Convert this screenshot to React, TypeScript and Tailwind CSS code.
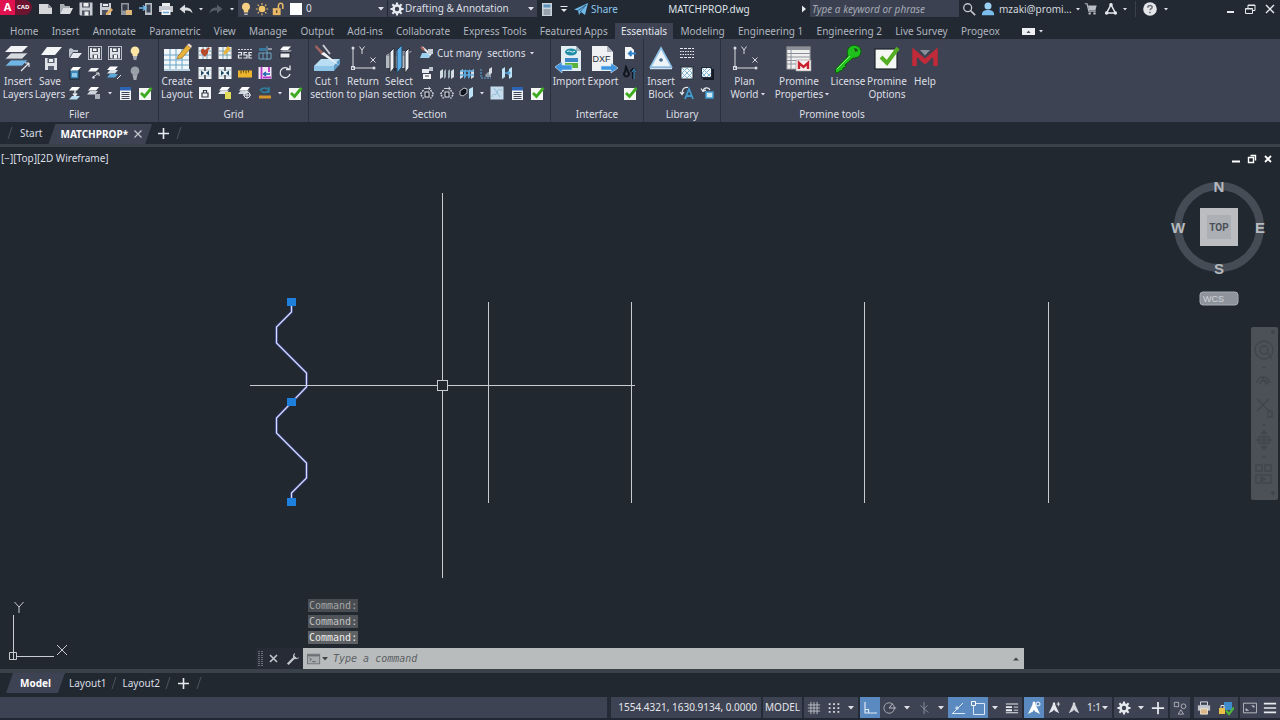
import React from 'react';

type Kids = { children?: React.ReactNode };

const W = '#e6e9ee';
const B = '#5aa9de';
const D = '#252b36';

function Ic({ children, s = 16, v = 16 }: Kids & { s?: number; v?: number }) {
  return (
    <svg width={s} height={s} viewBox={`0 0 ${v} ${v}`} fill="none" className="shrink-0" aria-hidden="true">
      {children}
    </svg>
  );
}

function Caret({ dark = false, small = false }: { dark?: boolean; small?: boolean }) {
  return (
    <svg width="8" height="6" viewBox="0 0 8 6" className="shrink-0" aria-hidden="true">
      <path d={small ? 'M2 2h4L4 4.4z' : 'M1 1h6L4 4.6z'} fill={dark ? '#444' : '#dde0e6'} />
    </svg>
  );
}

/* ---------- shared drawings ---------- */

const Check = () => (
  <Ic>
    <rect x="2" y="3" width="12" height="12" fill="#f4f7f4" />
    <path d="M4 8l3.500 3.500L14.500 3" stroke="#3cab1e" strokeWidth="2.800" />
  </Ic>
);
const Floppy = ({ framed = false }: { framed?: boolean }) => (
  <Ic>
    {framed && <rect x="1.5" y="1.5" width="13" height="13" stroke="#b9bec7" />}
    <path d="M3 3h10v10.5H4L3 12.500z" fill="#dfe2e7" />
    <path d="M5 3h6v4H5z" fill="#4b5160" />
    <path d="M6 3.500h3.500v2.500H6z" fill="#f4f4f4" />
    <path d="M5.500 9.500h5.500v4H5.500z" fill="#4b5160" />
    <path d="M7 10h3v3.500H7z" fill="#f4f4f4" />
  </Ic>
);
const Save = () => (
  <Ic>
    <path d="M1.500 1.500h13v13h-12l-1-1z" fill="#c9ccd2" />
    <path d="M4 1.500h8v5H4zM4 9.500h8v5H4z" fill="#4b5160" />
    <path d="M5.500 2h5v3.500h-5zM6.500 10.500h4v4h-4z" fill="#eceef0" />
  </Ic>
);
const Sheet = ({ y, c, x = 2 }: { y: number; c: string; x?: number }) => (
  <path d={`M${x + 3} ${y}h8l-3 3.500h-8z`} fill={c} />
);
const Bulb = ({ c }: { c: string }) => (
  <Ic>
    <path d="M8 1.500a4.300 4.300 0 0 0-2.500 7.800V11h5V9.300A4.300 4.300 0 0 0 8 1.500z" fill={c} />
    <path d="M6 12h4M6.500 14h3" stroke="#c9cdd4" strokeWidth="1.400" />
  </Ic>
);
const Table = () => (
  <Ic>
    <rect x="3" y="2" width="11" height="13" fill="#f0f2f4" />
    <rect x="3" y="2" width="11" height="3.500" fill="#2c63b5" />
    <path d="M4.500 7.500h8M4.500 9.500h8M4.500 11.500h8M4.500 13.500h8" stroke="#3d4456" />
  </Ic>
);
const GridBox = ({ c, d }: { c: string; d: string }) => (
  <Ic>
    <rect x="1.500" y="2" width="13" height="12" fill="#edf3f5" />
    <path d="M6 2v12M10 2v12M2 6h12M2 10h12" stroke="#5d90a6" strokeWidth=".8" />
    <path d={d} fill={c} />
  </Ic>
);
const Arrows = () => (
  <Ic>
    <rect x="1.500" y="2" width="13" height="12" fill="#edf3f5" />
    <path d="M8 2v4M8 10v4" stroke="#222a35" strokeWidth="1.400" />
    <path d="M2 5h5M9 5h5M2 11h5M9 11h5" stroke="#b3c5cf" />
    <path d="M7.200 8L4 5.500v5zM8.800 8L12 5.500v5z" fill="#1d4a66" />
  </Ic>
);
const Axes = () => (
  <Ic s={30} v={30}>
    <path d="M5 3v21h21" stroke="#d8dce2" />
    <rect x="3.500" y="22.500" width="3" height="3" stroke="#d8dce2" />
    <circle cx="5" cy="4" r="1.500" fill="#d8dce2" />
    <circle cx="26" cy="24" r="1.500" fill="#d8dce2" />
    <path d="M11.500 2.500l2.500 3.500 2.500-3.500M14 6v4M22.500 13.500l5 5m0-5l-5 5" stroke="#d8dce2" />
  </Ic>
);
const Planes = ({ arrow = false }: { arrow?: boolean }) => (
  <Ic>
    <path d="M1 6l3-2v8l-3 2zM12 6l3-2v8l-3 2z" fill="#d3dce3" />
    <path d="M5 6l2-2v8l-2 2zM9 6l2-2v8l-2 2z" fill={arrow ? B : '#9fb0bd'} />
    {arrow && <path d="M1 6h14M1 10h14" stroke={B} strokeWidth="1.400" />}
  </Ic>
);
const Gate = () => (
  <Ic>
    <path d="M4.500 5L1.500 9l3 4.500M11.500 5l3 4-3 4.500" stroke="#cfd6dd" strokeWidth="1.400" strokeDasharray="2 1" />
    <rect x="6" y="7" width="4" height="5" fill="#1f2631" stroke="#dfe4e9" />
    <path d="M5 3.500h6M9.500 2l2 1.500-2 1.500" stroke="#cfd6dd" />
  </Ic>
);
const Gear = ({ s = 14 }: { s?: number }) => (
  <Ic s={s}>
    <circle cx="8" cy="8" r="4" stroke={W} strokeWidth="3" />
    <path d="M8 .5v3M8 12.500v3M.5 8h3M12.500 8h3M2.700 2.700l2 2M11.300 11.300l2 2M13.300 2.700l-2 2M4.700 11.300l-2 2" stroke={W} strokeWidth="2.400" />
  </Ic>
);

/* ---------- ribbon icon sets ---------- */

const filer: React.ReactNode[][] = [
  [
    <Ic key="a"><path d="M2 4l2-1 3 2h4v2H6l-4 6z" fill="#b9c0c9" /><path d="M6 8h9l-4 5H3z" fill={W} /></Ic>,
    <Floppy key="b" framed />,
    <Floppy key="c" framed />,
    <Bulb key="d" c="#fbe6a6" />,
  ],
  [
    <Ic key="a"><rect x="3" y="5" width="9" height="9" stroke="#16202a" fill="#3c87b7" /><Sheet y={2} c="#fff" x={3} /><path d="M5 8h5v4H5z" fill="#8ec9ec" /></Ic>,
    <Ic key="b"><Sheet y={3} c="#f4f4f4" x={1} /><path d="M6 12l6-4M12 8H9M12 8v3" stroke="#dfe3e8" /><circle cx="6.500" cy="12.500" r="1.200" fill={W} /></Ic>,
    <Ic key="c"><Sheet y={1.5} c="#fff" x={0} /><Sheet y={5} c="#d8e3ec" x={0} /><Sheet y={9} c={B} x={0} /><path d="M10 14l4-4" stroke={W} /></Ic>,
    <Bulb key="d" c="#9aa0a8" />,
  ],
  [
    <Ic key="a"><Sheet y={2} c="#fff" /><Sheet y={11} c="#b8dcf2" /><path d="M8 5v6M6 8.500l2 2.500 2-2.500" stroke={W} strokeWidth="1.400" /></Ic>,
    <Ic key="b"><Sheet y={2} c="#fff" x={1} /><Sheet y={6} c="#cfd6dd" x={0} /><path d="M8 9h5v5H8z" fill="#aab0ba" /></Ic>,
    null,
    <Table key="c" />,
    <Check key="d" />,
  ],
];

const grid: React.ReactNode[][] = [
  [
    <GridBox key="a" c="#b4492b" d="M4 4.500l2.500-1L8 5l4-3 1 1.500-2 2V8l-3 4-4-4z" />,
    <GridBox key="b" c="#e9b53c" d="M6 8l5-7 3 3-6 6z" />,
    <Ic key="c"><path d="M1 4.500h14" stroke="#cfd4da" strokeDasharray="2 1" /><path d="M1 7.500h3.500v2.500H1.500v3H5M10 7.500H7v2.500h3v3H6.500M15 7.500h-3V13h3M12 10.200h2.500" stroke={W} strokeWidth="1.200" /></Ic>,
    <Ic key="d"><path d="M2 3h7v3H2z" fill="#37799d" /><path d="M10 1v14M2 8h12v6H2zM6 8v6" stroke="#68a5c4" /><path d="M11 4h4" stroke={W} /></Ic>,
    <Ic key="e"><Sheet y={1.5} c="#fff" x={3} /><path d="M3 8h10v5H3z" fill="#e8eaed" stroke="#20252f" /><path d="M3 7l3-2h9l-2 2z" fill="#8c939e" /></Ic>,
  ],
  [
    <Arrows key="a" />,
    <Arrows key="b" />,
    <Ic key="c"><path d="M1 5.500h14v7H1z" fill="#ecb52d" /><path d="M4 5.500v3M6.500 5.500v2M9 5.500v3M11.500 5.500v2" stroke="#5b4410" /></Ic>,
    <Ic key="d"><rect x="1.500" y="2" width="13" height="12" fill="#f3e6f7" /><path d="M4.500 2v12M12 2v5M6 12.500h8" stroke="#b438c6" strokeWidth="1.800" /><path d="M13 9H7m2-2L6.500 9 9 11" stroke="#1e68ae" strokeWidth="1.500" /></Ic>,
    <Ic key="e"><path d="M12 4.500A5 5 0 1 0 13 9" stroke={W} strokeWidth="1.300" /><path d="M9 4.500h4v-4" stroke={W} strokeWidth="1.300" /></Ic>,
  ],
  [
    <Ic key="a"><rect x="2" y="2" width="12" height="12" fill="#f2f4f5" /><path d="M5 8h6v4H5zM6.500 8V5.500h3V8" stroke="#333b48" strokeWidth="1.200" /></Ic>,
    <Ic key="b"><Sheet y={2} c="#fff" x={2} /><Sheet y={5.5} c="#dfe5ea" x={1} /><path d="M8 7h6v7H8z" fill="#e2dc5c" /></Ic>,
    <Ic key="c"><Sheet y={2} c="#fff" x={2} /><Sheet y={5.5} c="#cfd6dd" x={1} /><circle cx="10" cy="10" r="3" stroke={W} /><path d="M10 6v8M6 10h8" stroke={W} /></Ic>,
    <Ic key="d"><path d="M3 5q5 5 9 0M3 5q5-4 9 0M12 2v5H9" stroke="#2f7f9f" strokeWidth="1.600" /><path d="M2 10.500h12v3H2z" fill="#d9942b" /></Ic>,
    null,
    <Check key="e" />,
  ],
];

const section: React.ReactNode[][] = [
  [
    <Ic key="a"><path d="M3 4h7v4H3z" fill={W} /><path d="M4 9h8v5H4z" fill="#f6f6f6" /><path d="M10 2h4v4h-4z" fill="#bcc4cc" /><path d="M6 11h4" stroke="#333b48" /></Ic>,
    <Planes key="b" />,
    <Planes key="c" arrow />,
    <Ic key="d"><path d="M2 4v9h10" stroke={B} strokeDasharray="2 1" /><path d="M6 10l3-3h3v5H7z" fill="#8f9ba8" /><path d="M10 4l3-2v6l-3 2z" fill="#d8dde3" /></Ic>,
    <Ic key="e"><path d="M3 4l3-2v10l-3 2zM10 4l3-2v10l-3 2z" fill="#bfe3f7" /><path d="M6 8h5M9 6l2 2-2 2" stroke={B} strokeWidth="1.400" /></Ic>,
  ],
  [
    <Gate key="a" />,
    <Gate key="b" />,
    <Ic key="c"><path d="M1 6l4-3 3 1v4l-4 3-3-1z" fill="#10151d" stroke="#b8c0c8" /><path d="M10 4l4-2v9l-4 3z" fill="#bfe3f7" /></Ic>,
    null,
    <Ic key="d"><rect x="1.500" y="1.500" width="13" height="13" fill="#c6dcec" /><path d="M3 12c2-6 3 1 5-5s3 1 5-3M5 3l6 9" stroke="#8db8d6" /></Ic>,
    <Table key="e" />,
    <Check key="f" />,
  ],
];

function SmallGrid({ rows, name }: { rows: React.ReactNode[][]; name: string }) {
  return (
    <>
      {rows.map((row, r) => (
        <div key={r} className="flex h-5 items-center">
          {row.map((ic, c) =>
            ic === null ? (
              <button key={c} aria-label={`${name} more`} className="flex w-2.5 justify-center"><Caret small /></button>
            ) : (
              <button key={c} aria-label={`${name} tool ${r + 1}.${c + 1}`} className="flex w-5 justify-center">{ic}</button>
            ),
          )}
        </div>
      ))}
    </>
  );
}

function Big({ icon, lines, w, more = false }: { icon: React.ReactNode; lines: string[]; w: string; more?: boolean }) {
  return (
    <button className={`flex shrink-0 flex-col items-center ${w}`}>
      <span className="flex h-[32px] items-center justify-center">{icon}</span>
      <span className="relative text-center leading-[13px] whitespace-nowrap">
        {lines.map((l) => <span key={l} className="block">{l}</span>)}
        {more && <span className="absolute -right-2 bottom-1"><Caret small /></span>}
      </span>
    </button>
  );
}

function Panel({ title, w, last = false, children }: Kids & { title: string; w: string; last?: boolean }) {
  return (
    <section className={`flex shrink-0 flex-col ${last ? '' : 'border-r border-[#2a303c]'} ${w}`}>
      <div className="flex h-[67px] pt-1">{children}</div>
      <h2 className="text-center leading-4">{title}</h2>
    </section>
  );
}

/* ---------- large icons ---------- */

const InsertLayers = (
  <Ic s={32} v={32}>
    <path d="M9 3h17l-6 6H3z" fill="#f2f3f5" /><path d="M9 10h17l-6 6H3z" fill="#d6dade" stroke="#4a5060" strokeWidth=".8" />
    <path d="M9 17h17l-6 6H3z" fill="#6fb6e6" stroke="#4a5060" strokeWidth=".8" />
    <path d="M19 28l8-8m0 0h-4m4 0v4" stroke="#e6e9ee" strokeWidth="1.200" />
  </Ic>
);
const SaveLayers = (
  <Ic s={32} v={32}>
    <path d="M13 4h15l-7 8H7z" fill="#f4f5f6" /><path d="M11 15h12v12H11z" fill="#dfe2e6" />
    <path d="M13.500 15h7v5h-7zM14 23h6v4h-6z" fill="#596070" /><path d="M15 16h4v3h-4z" fill="#eee" />
  </Ic>
);
const CreateLayout = (
  <Ic s={32} v={32}>
    <rect x="3" y="6" width="25" height="20" fill="#f1f6f9" />
    <path d="M9 6v20M15 6v20M21 6v20M3 12h25M3 17h25M3 22h25" stroke="#6aa5c9" />
    <path d="M3 26h26v2H3z" fill="#b9d2e0" /><path d="M17 13L26 2l4 3-9 10-5 1z" fill="#e8b23b" stroke="#73602f" strokeWidth=".6" /><path d="M26 2l4 3 1-2-3-2.500z" fill="#f2d9d2" />
  </Ic>
);
const CutOne = (
  <Ic s={32} v={32}>
    <path d="M10 16h19l-6 7H3z" fill="#b9def4" /><path d="M3 23h20v5H3z" fill="#8fc5e8" /><path d="M23 23l6-7v5l-6 7z" fill="#5b9cc9" />
    <path d="M5 2l8 8-2 2-7-8z" fill="#a3655f" /><path d="M10 11l3-2 16 14z" fill="#f2f4f6" /><path d="M12 2l7 9" stroke="#d0d4da" strokeWidth="1.800" />
  </Ic>
);
const SelectSection = (
  <Ic s={32} v={32}>
    <path d="M3 12l7-4h19l-4 4v12H3z" fill="#8d949d" /><path d="M3 13h22v12H3z" fill="#b3b8be" />
    <path d="M7 9l4-4v20l-4 5zM22 9l4-4v20l-4 5z" fill="#edf0f2" stroke="#2a303b" /><path d="M14 7l5-5v22l-5 6z" fill="#58aee8" stroke="#23405a" /><path d="M12 8v20" stroke="#222833" strokeWidth="1.500" />
  </Ic>
);
const Import = (
  <Ic s={32} v={32}>
    <path d="M8 3h15l5 5v20H8z" fill="#e3eef2" /><path d="M23 3l5 5h-5z" fill="#9fb3bf" />
    <ellipse cx="18" cy="9" rx="6" ry="3.500" fill="#1e8da8" /><path d="M14 9c2-3 5 2 8-1" stroke="#fff" /><path d="M12 15h13v4H12z" fill="#3d86c6" /><path d="M12 20h13v5H12z" fill="#58b23c" />
    <path d="M2 24l7-5v3h10v5H9v3z" fill="#3e94df" stroke="#cfe7fa" strokeWidth=".6" />
  </Ic>
);
const Export = (
  <Ic s={32} v={32}>
    <path d="M5 3h15l6 6v19H5z" fill="#f0f1f2" /><path d="M20 3l6 6h-6z" fill="#adb4bd" />
    <text x="5.500" y="19" fontSize="9" fontFamily="'Liberation Sans', sans-serif" fill="#242b37">DXF</text>
    <path d="M31 25l-7-5v3H14v4h10v3z" fill="#3e94df" stroke="#cfe7fa" strokeWidth=".6" />
  </Ic>
);
const InsertBlock = (
  <Ic s={32} v={32}>
    <path d="M16 5L5.500 24h21z" fill="#eef3f7" stroke="#8fc4ea" strokeWidth="1.600" />
    <circle cx="16" cy="17" r="1.800" fill="#3f6d91" /><path d="M5 25.500h22" stroke="#cfe3f2" strokeWidth="1.500" />
  </Ic>
);
const Props = (
  <Ic s={32} v={32}>
    <rect x="4" y="4" width="23" height="22" fill="#f0f0f0" stroke="#aaa" /><path d="M4 4h23v3H4z" fill="#8b9099" />
    <path d="M8 4v22M4 10.500h23M4 14h23M4 17.500h23M4 21h23" stroke="#8c9199" />
    <rect x="13" y="17" width="15" height="11" fill="#f6f0f0" stroke="#999" strokeWidth=".6" /><path d="M16 26v-6l4.500 4 4.500-4v6" stroke="#c9202e" strokeWidth="2.400" />
  </Ic>
);
const Key = (
  <Ic s={32} v={32}>
    <path d="M20 2.500c5-1 9 2 9 6s-4 7-8 6.500L13 22l1 2-3 1-.5 2.500-3 .5-1 1.500-3 .5V26L16 13c-2-4 0-9 4-10.500z" fill="#1fc11c" stroke="#0c5a0b" />
    <path d="M22 5c2 0 4 1 4 3l-3 1c0-2-1-3-1-4z" fill="#24541f" /><path d="M5 26L18 13" stroke="#8bf077" />
  </Ic>
);
const Options = (
  <Ic s={32} v={32}>
    <rect x="4" y="6" width="22" height="20" fill="#f5f7f5" stroke="#1d232c" strokeWidth="1.200" />
    <path d="M10 14l6 6L27 5" stroke="#55ad22" strokeWidth="4" />
  </Ic>
);
const MLogo = (
  <Ic s={32} v={32}>
    <path d="M5.500 23V9.500L16 18.500l10.500-9V23" stroke="#c12a38" strokeWidth="4.500" /><path d="M11 7h10l-5 5.500z" fill="#8a9099" /><path d="M9.500 15v9M22.500 15v9" stroke="#3d4252" strokeWidth="1.500" />
  </Ic>
);

const tabs = ['Home', 'Insert', 'Annotate', 'Parametric', 'View', 'Manage', 'Output', 'Add-ins', 'Collaborate', 'Express Tools', 'Featured Apps', 'Essentials', 'Modeling', 'Engineering 1', 'Engineering 2', 'Live Survey', 'Progeox'];

const quick: [string, React.ReactNode][] = [
  ['New', <Ic key="i"><path d="M1 3h9l4 4v6H1z" fill="#d4d6da" /><path d="M10 3l4 4h-4z" fill="#8e939c" /></Ic>],
  ['Open', <Ic key="i"><path d="M2 3h4l1 2h5v2H5l-3 6z" fill="#a9adb4" /><path d="M5 7h10l-3 6H2z" fill="#dcdee2" /></Ic>],
  ['Save', <Save key="i" />],
  ['Save as', <Ic key="i"><path d="M2 2h11v12H2z" fill="#c9ccd2" /><path d="M4 2h7v4H4zM4 9h6v5H4z" fill="#4b5160" /><path d="M5 3h5v2H5z" fill="#eee" /><path d="M8 12l5-5 2 2-5 5H8z" fill="#e3b36a" /></Ic>],
  ['Open from web', <Ic key="i"><path d="M3 2h8v12H3z" fill="#8f949d" /><path d="M4.500 3.500h5v6h-5z" fill="#353b48" /><path d="M8 9h6v5H8z" fill="#dfb77a" /></Ic>],
  ['Save to web', <Ic key="i"><path d="M7 2h7v12H7z" fill="#b9bdc4" /><path d="M8.500 3.500h4v8h-4z" fill="#3e4a5b" /><path d="M1 7h6M5 4.500L8 7 5 9.500" stroke="#6db7ea" strokeWidth="1.500" /></Ic>],
  ['Plot', <Ic key="i"><path d="M4 2h8v3H4z" fill="#eceef0" /><path d="M1 5h14v6H1z" fill="#c6cad0" /><path d="M3.500 9h9v5h-9z" fill="#f1f3f5" /><path d="M5 11.500h6" stroke="#6aa8d8" strokeWidth="1.500" /></Ic>],
  ['Undo', <Ic key="i"><path d="M7 3.500v3c4 0 7 1.500 7.500 6C13 10 10.500 9.500 7 9.500v3L1.500 8z" fill="#dcdee2" /></Ic>],
];

const Slash = () => (
  <svg width="8" height="14" viewBox="0 0 8 14" className="shrink-0" aria-hidden="true"><path d="M6 1L2 13" stroke="#4d535f" /></svg>
);

/* ---------- title bar ---------- */

function TitleBar() {
  return (
    <header className="flex h-[18px] items-center bg-[#222933]">
      <button aria-label="Application menu" className="mr-1 flex h-[15px] w-8 items-center self-start rounded-r-lg bg-[#6d1430] text-white">
        <span className="flex h-full w-[15px] items-center justify-center bg-[#e01250] text-[11px] font-bold">A</span>
        <span className="pl-0.5 text-[6px] font-bold">CAD</span>
      </button>
      {quick.map(([n, ic]) => <button key={n} aria-label={n} className="flex w-5 justify-center">{ic}</button>)}
      <button aria-label="Undo list" className="flex w-2.5 justify-center"><Caret small /></button>
      <button aria-label="Redo" className="flex w-5 justify-center">
        <Ic><path d="M9 3.500v3c-4 0-7 1.500-7.500 6C3 10 5.500 9.500 9 9.500v3L14.500 8z" fill="#565c67" /></Ic>
      </button>
      <button aria-label="Redo list" className="flex w-3 justify-center"><Caret small /></button>
      <label className="flex h-[17px] w-[149px] items-center self-start bg-[#3b4150]">
        <span className="flex w-4 justify-center"><Ic s={14}><path d="M8 1a4.500 4.500 0 0 0-2.500 8.300V12h5V9.300A4.500 4.500 0 0 0 8 1z" fill="#f6cf83" /><path d="M6 14h4" stroke="#ccc" strokeWidth="1.500" /></Ic></span>
        <span className="flex w-4 justify-center"><Ic s={14}><circle cx="8" cy="8" r="3.800" fill="#f4c56a" /><path d="M8 1v2M8 13v2M1 8h2M13 8h2M3 3l1.500 1.500M11.500 11.500L13 13M13 3l-1.500 1.500M4.500 11.500L3 13" stroke="#f4c56a" strokeWidth="1.300" /></Ic></span>
        <span className="flex w-4 justify-center"><Ic s={14}><path d="M2 7h9v8H2z" fill="#e8b868" /><path d="M8.500 7V4a2.500 2.500 0 0 1 5 0v4" stroke="#e8b868" strokeWidth="1.800" /><path d="M6.500 9.500v3" stroke="#5b482a" strokeWidth="1.500" /></Ic></span>
        <span className="mx-1 h-[12px] w-[12px] bg-white" />
        <select aria-label="Layer" className="min-w-0 flex-1 appearance-none bg-transparent outline-none"><option>0</option></select>
        <span className="pr-0.5"><Caret /></span>
      </label>
      <label className="ml-px flex h-[17px] w-[149px] items-center self-start bg-[#3b4150] pl-0.5">
        <Gear />
        <select aria-label="Workspace" className="min-w-0 flex-1 appearance-none bg-transparent pl-px outline-none"><option>Drafting &amp; Annotation</option></select>
        <span className="pr-0.5"><Caret /></span>
      </label>
      <button aria-label="Calculator" className="flex w-5 justify-center">
        <Ic><path d="M3 2h10v13H3z" fill="#c9d3dc" /><path d="M4.500 3.500h7v3h-7z" fill="#5c93bd" /><path d="M4.500 9h7M4.500 11h7M4.500 13h7" stroke="#6a7482" /></Ic>
      </button>
      <button aria-label="Customize" className="flex w-3.5 justify-center">
        <Ic s={10} v={10}><path d="M1.500 2.500h7" stroke={W} /><path d="M2 5h6L5 8z" fill={W} /></Ic>
      </button>
      <button className="flex items-center gap-0.5 pl-0.5 text-[#8cc6ee]">
        <Ic><path d="M1 8.500L15 2l-3 12-4-3-2 3-1-4.500z" fill="#6db8e8" /><path d="M5 9.500L13 4l-6 7" stroke="#28516d" strokeWidth=".8" /></Ic>
        Share
      </button>
      <h1 className="flex-1 text-center text-[#dfe2e7]">MATCHPROP.dwg</h1>
      <div className="flex h-full w-[480px] items-center text-[#d4d7dd]">
        <button aria-label="Expand search" className="flex w-2.5 justify-start"><Ic s={8} v={8}><path d="M2 0.500v7L6 4z" fill="#e6e9ee" /></Ic></button>
        <input aria-label="Search" placeholder="Type a keyword or phrase" className="h-[17px] w-[149px] self-start bg-[#3b4150] px-0.5 italic outline-none placeholder:text-[#a5abb6]" />
        <button aria-label="Find" className="flex w-5 justify-center"><Ic s={14}><circle cx="6.500" cy="6.500" r="4.500" stroke="#c3c7ce" strokeWidth="1.500" /><path d="M10 10l5 5" stroke="#c3c7ce" strokeWidth="2" /></Ic></button>
        <button className="flex w-[102px] items-center gap-0.5 pl-0.5">
          <Ic s={14}><circle cx="8" cy="4.500" r="4" fill="#9bd0f5" /><path d="M1 15c0-5 3-6 7-6s7 1 7 6z" fill="#7bbdec" /></Ic>
          <span className="flex-1 pl-0.5 text-left">mzaki@promi...</span>
          <Caret small />
        </button>
        <button aria-label="App store" className="flex w-5 justify-center"><Ic s={14}><path d="M1 2h2.500l2 8.500h8" stroke="#b9bdc5" strokeWidth="1.300" /><path d="M4.500 4h10l-1.500 5.500H6z" fill="#b9bdc5" /><circle cx="6.500" cy="13" r="1.400" fill="#b9bdc5" /><circle cx="12" cy="13" r="1.400" fill="#b9bdc5" /></Ic></button>
        <button aria-label="Connect" className="flex w-5 items-center justify-center"><Ic s={14}><path d="M8 3L3 12.500h10z" stroke={W} strokeWidth="1.700" /><circle cx="8" cy="3" r="2" fill={W} /><circle cx="3" cy="12.500" r="2" fill={W} /><circle cx="13" cy="12.500" r="2" fill={W} /></Ic></button>
        <Caret small />
        <span className="mx-1.5 h-4 w-px bg-[#3a404c]" />
        <button aria-label="Help" className="flex w-4 justify-center"><Ic s={14}><circle cx="8" cy="8" r="7.800" fill="#e4e6ea" /><path d="M5.500 6.500c0-3.500 5-3.300 5-.6 0 1.600-2.300 1.700-2.400 3.600M8 11.200v1.600" stroke="#6b7079" strokeWidth="1.700" /></Ic></button>
        <span className="ml-1 flex"><Caret small /></span>
        <div className="ml-auto flex">
          <button aria-label="Minimize" className="flex w-5 justify-center"><Ic s={12} v={12}><path d="M3 9h7" stroke={W} strokeWidth="2" /></Ic></button>
          <button aria-label="Restore" className="flex w-5 justify-center"><Ic s={12} v={12}><path d="M1.500 5.500h7v5h-7zM4 5V2h7v5.500H9M1.500 6h7M4 2.500h7" stroke={W} /></Ic></button>
          <button aria-label="Close" className="flex w-5 justify-center"><Ic s={12} v={12}><path d="M2 2l8 8m0-8l-8 8" stroke={W} strokeWidth="1.400" /></Ic></button>
        </div>
      </div>
    </header>
  );
}

/* ---------- drawing area ---------- */

function Drawing() {
  const pl = '291.5,155 291.5,165 276.5,180 276.5,196 306.5,226 306.5,240 276.5,271 276.5,286 306.5,316 306.5,331 291.5,346 291.5,355';
  return (
    <svg width="1280" height="523" viewBox="0 0 1280 523" fill="none" className="absolute left-0 top-0 max-w-none" aria-label="Drawing">
      <polyline points={pl} stroke="#4a55b8" strokeWidth="3" opacity=".6" />
      <polyline points={pl} stroke="#d9dcf6" strokeWidth="1.200" />
      <g stroke="#c8cbd0" shapeRendering="crispEdges">
        <path d="M488.500 155v201M631.500 155v201M864.500 155v201M1048.500 155v201" />
        <path d="M442.500 46v187M442.500 244v187M250 238.500h187M448 238.500h187M437.500 233.500h10v10h-10z" />
      </g>
      <g fill="#1f7fdc"><path d="M287 151h9v8h-9zM287 251h9v8h-9zM287 351h9v8h-9z" /></g>
      <path d="M13.500 468v44M17 509.500h37M9.500 505.500h7v7h-7zM14.500 455l4.500 5 4.500-5M19 460v6M57 498l10 10m0-10l-10 10" stroke="#c9cdd3" />
    </svg>
  );
}

function ViewCube() {
  return (
    <svg width="100" height="130" viewBox="0 0 100 130" fill="none" className="absolute right-[11px] top-[30px]" aria-label="View cube">
      <circle cx="50" cy="50" r="41" stroke="#464c55" strokeWidth="8" />
      <g fontFamily="'Liberation Sans', sans-serif" fontWeight="700" fontSize="15" fill="#b6babf" textAnchor="middle">
        <text x="50" y="15">N</text><text x="9" y="56">W</text><text x="91" y="56">E</text><text x="50" y="97">S</text>
      </g>
      <rect x="31" y="31" width="38" height="38" fill="#bbbdc0" /><rect x="38" y="38" width="24" height="24" fill="#acafb3" />
      <text x="50" y="54" fontFamily="Roboto, sans-serif" fontWeight="700" fontSize="10" fill="#4a4f57" textAnchor="middle">TOP</text>
      <rect x="31" y="115" width="38" height="13" rx="3" fill="#8f939c" stroke="#a9adb5" />
      <text x="34" y="125" fontFamily="'Liberation Sans', sans-serif" fontSize="9" fill="#d0d3d8">WCS</text>
    </svg>
  );
}

function NavBar() {
  return (
    <svg width="27" height="173" viewBox="0 0 27 173" fill="none" className="absolute right-0.5 top-[180px]" aria-label="Navigation bar">
      <rect width="27" height="173" rx="2" fill="#4b5157" />
      <g stroke="#3f454c" strokeWidth="1.300">
        <circle cx="13" cy="23" r="9" /><circle cx="13" cy="23" r="4" /><path d="M17 26l4 6" />
        <path d="M6 56c0-8 12-8 13 0M9 57c1-5 8-5 8 0M11 50l5 8" />
        <path d="M6 72l12 12M18 72L6 84M17 84h4v6h-4z" />
        <path d="M13 104v18M4 113h18M10 107l3-3 3 3M10 119l3 3 3-3M8 110h10v6H8z" />
        <path d="M5 138h6v6H5zM14 138h6v6h-6zM5 148h15v8H5zM10 150l4 2-4 2z" />
      </g>
      <g fill="#3f454c"><path d="M11 40h4l-2 2zM11 97h4l-2 2zM11 129h4l-2 2z" /><circle cx="22" cy="5" r="2" /><circle cx="22" cy="166" r="2" /></g>
    </svg>
  );
}

function CommandLine() {
  return (
    <div className="relative mx-auto w-[768px] max-w-full font-['DejaVu_Sans_Mono','Liberation_Mono',monospace] text-[10px]">
      <div className="mb-1 ml-[52px] flex flex-col items-start gap-[3px]">
        <span className="bg-[#494d51] px-px leading-[13px] text-[#a3a6a8]">Command:</span>
        <span className="bg-[#505458] px-px leading-[13px] text-[#c0c2c4]">Command:</span>
        <span className="bg-[#5f6264] px-px leading-[13px] text-[#eceded]">Command:</span>
      </div>
      <div className="flex h-[21px] items-stretch bg-[#262b36]">
        <div className="flex w-[47px] items-center gap-1.5 pl-0.5 text-[#c3c7cd]">
          <svg width="5" height="15" viewBox="0 0 5 15" aria-hidden="true"><path d="M1 0v15M4 0v15" stroke="#aab0b8" strokeDasharray="1 1" /></svg>
          <button aria-label="Close command line"><Ic s={9} v={9}><path d="M1 1l7 7m0-7L1 8" stroke="#c3c7cd" strokeWidth="1.600" /></Ic></button>
          <button aria-label="Customize command line" className="ml-0.5"><Ic s={14}><path d="M2 14l8-8" stroke="#c3c7cd" strokeWidth="2.600" /><path d="M10.500 1.200a3.600 3.600 0 1 0 4.500 4.500l-2.500 1.500-3-3z" fill="#c3c7cd" /></Ic></button>
        </div>
        <div className="flex min-w-0 flex-1 items-center bg-[#b9bcbd] px-1">
          <Ic s={14}><rect x=".5" y="2.500" width="14" height="11" stroke="#6b6f73" fill="#a9acae" /><path d="M1 4h13" stroke="#6b6f73" strokeWidth="2" /><path d="M3 7l2 1.500L3 10M6 11h4" stroke="#555" /></Ic>
          <Caret dark />
          <input aria-label="Command" placeholder="Type a command" className="min-w-0 flex-1 bg-transparent px-1 italic outline-none placeholder:text-[#5c6063]" />
          <button aria-label="Command history"><Ic s={8} v={8}><path d="M1 5.500h6L4 2.500z" fill="#444" /></Ic></button>
        </div>
      </div>
    </div>
  );
}

/* ---------- status bar ---------- */

function St({ n, on = false, children }: Kids & { n: string; on?: boolean }) {
  return <button aria-label={n} aria-pressed={on} className={`flex h-full w-5 items-center justify-center ${on ? 'bg-[#5a8ac0]' : ''}`}>{children}</button>;
}
const Dd = () => <button aria-label="Options" className="flex h-full w-3.5 items-center justify-center"><Caret /></button>;
const Sep = ({ wide = false }) => <span className={`h-full bg-[#262c37] ${wide ? 'w-1' : 'w-0.5'}`} />;
const person = 'M8 1.500c1 0 1.500 1 1.500 3L14 14 9 11.500 8 9.500l-1 2L2 14l4.500-9.500c0-2 .5-3 1.500-3z';

function StatusBar() {
  return (
    <footer className="flex h-[21px] items-center bg-[#3e4353] text-[#e4e6ea]">
      <span className="flex-1" />
      <Sep wide />
      <span className="w-[150px] pr-1 text-right">1554.4321, 1630.9134, 0.0000</span>
      <Sep />
      <button className="w-[39px] text-center">MODEL</button>
      <Sep />
      <St n="Grid"><Ic s={14}><path d="M4.500 1v14M8 1v14M11.500 1v14M1 4.500h14M1 8h14M1 11.500h14" stroke="#c3c7cf" /></Ic></St>
      <St n="Snap"><Ic s={14}><path d="M2 3.500h12M2 8h12M2 12.500h12" stroke="#dfe2e7" strokeWidth="2" strokeDasharray="2 3" /></Ic></St>
      <Dd />
      <Sep />
      <St n="Ortho" on><Ic><path d="M3 2v11h12M3 9.500h3.500V13" stroke="#dbe9f7" strokeWidth="1.200" /></Ic></St>
      <St n="Polar"><Ic s={14}><circle cx="7" cy="8" r="6" stroke="#aeb3bd" /><path d="M7 8h8M7 8l4-5" stroke="#c7cbd2" /></Ic></St>
      <Dd />
      <St n="Isodraft"><Ic s={14}><path d="M8 1v14M4 5l4 4 5 4M8 9l4-4" stroke="#8f959f" /></Ic></St>
      <Dd />
      <St n="Object tracking" on><Ic><path d="M2 13.500h13M3 13L13 3" stroke="#dbe9f7" /><path d="M7 6v4M5 8h4" stroke="#dbe9f7" /></Ic></St>
      <St n="Object snap" on><Ic><path d="M3.500 3.500h11v11h-11z" stroke="#dbe9f7" /><path d="M1.500 1.500h4v4h-4z" fill="#5a8ac0" stroke="#fff" /></Ic></St>
      <Dd />
      <St n="Lineweight"><Ic s={14}><path d="M1 3.500h14M1 13.500h14" stroke={W} strokeWidth="1.200" /><path d="M1 7h7M1 10.500h7" stroke={W} strokeWidth="2.200" /><path d="M10 7h5M10 10.500h5" stroke={W} /></Ic></St>
      <Sep />
      <St n="Annotation visibility" on><Ic><path d={person} fill="#fff" /><circle cx="12" cy="4" r="2" stroke="#fff" /></Ic></St>
      <St n="Auto scale"><Ic s={14}><path d={person} fill={W} /><path d="M13 1v5M11 3.500h4" stroke={W} /></Ic></St>
      <St n="Annotation scale"><Ic s={14}><path d={person} fill="#d3d6dc" /></Ic></St>
      <button className="flex w-7 items-center justify-center">1:1<Caret /></button>
      <Sep />
      <St n="Workspace switching"><Gear s={14} /></St>
      <Dd />
      <St n="Add"><Ic s={14}><path d="M8 1v14M1 8h14" stroke={W} strokeWidth="2" /></Ic></St>
      <Sep />
      <St n="Isolate objects"><Ic s={14}><path d="M1.500 1.500h5v5h-5zM6 15l3-5 3 5z" stroke="#b5bac3" /><circle cx="12" cy="6" r="2.700" stroke="#b5bac3" /></Ic></St>
      <Sep wide />
      <St n="Plot"><Ic s={14}><path d="M4 1h8v4H4z" stroke={W} /><path d="M1 5h14v6H1z" fill="#c3c7cd" /><path d="M4 9h8v6H4z" fill="#dcb887" stroke="#efe5d6" /></Ic></St>
      <button aria-label="Layer check" className="flex w-6 justify-center"><Ic><path d="M6 2h8v8H6z" fill="#3f8cca" /><path d="M1 8h6v6H1z" fill="#eabf45" /><path d="M3 8V5.500h3V8" stroke="#dfe3e8" /><path d="M8 10.500l3 3.500 5-6.500" stroke="#4db53c" strokeWidth="2.200" /></Ic></button>
      <Sep />
      <St n="Clean screen"><Ic s={14}><path d="M.5 2.500h15v11H.5z" stroke="#c3c7cd" /><path d="M9 5h4v3zM7 11H3V8z" fill="#c3c7cd" /></Ic></St>
      <St n="Customization"><Ic s={14}><path d="M1 3h14M1 8h14M1 13h14" stroke={W} strokeWidth="1.800" /></Ic></St>
    </footer>
  );
}

export default function App() {
  return (
    <div className="flex min-h-screen flex-col overflow-hidden bg-[#212830] font-['Noto_Sans','Open_Sans',sans-serif] text-[10px] text-[#dcdfe5]">
      <TitleBar />

      <nav className="flex h-[21px] items-end bg-[#222933] text-[#b0b5bf]">
        <div className="flex w-[1006px] justify-between pl-1">
          {tabs.map((t) => (
            <button key={t} className={`h-4 px-1.5 leading-4 whitespace-nowrap ${t === 'Essentials' ? 'bg-[#3e4353] text-[#e4e7ec]' : ''}`}>{t}</button>
          ))}
        </div>
        <button aria-label="Ribbon display" className="ml-4 flex h-4 items-center gap-0.5">
          <Ic s={13} v={13}><rect x="0" y="3" width="13" height="7" fill="#eef0f3" /><path d="M4.500 8h4l-2-2.500z" fill="#4a505c" /></Ic>
          <Caret small />
        </button>
      </nav>

      <div className="flex h-[83px] bg-[#3e4353]">
        <Panel title="Filer" w="w-[159px]">
          <div className="flex w-[65px] shrink-0 pl-0.5">
            <Big icon={InsertLayers} lines={['Insert', 'Layers']} w="w-8" />
            <Big icon={SaveLayers} lines={['Save', 'Layers']} w="w-8" />
          </div>
          <div><SmallGrid rows={filer} name="Filer" /></div>
        </Panel>
        <Panel title="Grid" w="w-[150px]">
          <Big icon={CreateLayout} lines={['Create', 'Layout']} w="w-9" />
          <div><SmallGrid rows={grid} name="Grid" /></div>
        </Panel>
        <Panel title="Section" w="w-[242px]">
          <div className="flex w-[108px] shrink-0">
            <Big icon={CutOne} lines={['Cut 1', 'section']} w="w-9" />
            <Big icon={<Axes />} lines={['Return', 'to plan']} w="w-9" />
            <Big icon={SelectSection} lines={['Select', 'section']} w="w-9" />
          </div>
          <div>
            <button className="flex h-5 items-center gap-0.5 pl-0.5 whitespace-nowrap">
              <Ic><path d="M3 8h10l-3 5H1z" fill="#9dd0f0" /><path d="M3 2l9 8" stroke="#f0f2f4" strokeWidth="2" /><path d="M2 2l3 3" stroke="#b0605a" strokeWidth="2" /><path d="M9 4h5v5H9z" fill="#c7cdd5" /></Ic>
              <span>Cut many&nbsp; sections</span>
              <Caret small />
            </button>
            <SmallGrid rows={section} name="Section" />
          </div>
        </Panel>
        <Panel title="Interface" w="w-[93px]">
          <div className="flex shrink-0 pl-px">
            <Big icon={Import} lines={['Import']} w="w-[34px]" />
            <Big icon={Export} lines={['Export']} w="w-[34px]" />
          </div>
          <div>
            <SmallGrid
              name="Interface"
              rows={[
                [<Ic key="a"><path d="M3 2h6l3 3v9H3z" fill="#f2f4f6" /><path d="M14 8.500H7M9.500 6L7 8.500 9.500 11" stroke="#2d7fc8" strokeWidth="2" /></Ic>],
                [<Ic key="a"><path d="M4 2l2 5a2.500 2.500 0 1 1-3 0zM11 4v10M8.500 6.500L11 4l3 2" stroke="#10161f" strokeWidth="2" /><path d="M12 5v9M10 7l2-3 2 3" stroke="#3a8abf" /></Ic>],
                [<Check key="a" />],
              ]}
            />
          </div>
        </Panel>
        <Panel title="Library" w="w-[77px]">
          <div className="flex shrink-0 pl-px">
            <Big icon={InsertBlock} lines={['Insert', 'Block']} w="w-8" />
          </div>
          <div>
            <SmallGrid
              name="Library"
              rows={[
                [<Ic key="a"><path d="M1 3.500h14M1 12.500h14" stroke={W} strokeDasharray="3 1" /><path d="M1 6.500h14M1 9.500h14" stroke={W} strokeDasharray="1.500 1" /></Ic>],
                [
                  <Ic key="a"><rect x="2" y="2" width="12" height="12" fill="#f4f8fa" stroke={D} /><path d="M3 8l5-5M3 13L13 3M8 13l5-5M3 8l5 5M3 3l10 10M8 3l5 5" stroke="#7db6d4" /></Ic>,
                  <Ic key="b"><path d="M4 4h11v11H4z" fill="#141a23" /><rect x="2.500" y="2.500" width="10" height="10" fill="#f4f8fa" stroke={D} /><path d="M3 8l5-5M3 12l9-9M8 12l4-4M3 8l4 4M3 3l9 9" stroke="#7db6d4" /></Ic>,
                ],
                [
                  <Ic key="a"><path d="M6 14l4-10 4 10M7.500 11h5" stroke="#3f9bd0" strokeWidth="1.800" /><path d="M9 2.500C4 2 3 5 3 9M1 7l2 2.500L5 7" stroke={W} strokeWidth="1.200" /></Ic>,
                  <Ic key="b"><rect x="7" y="7" width="7" height="6" fill="#cfe8f8" stroke="#3f9bd0" strokeWidth="1.500" /><path d="M11 5C10 2 5 2 4 6M2 3.500l2 3 3-1.500" stroke={W} strokeWidth="1.200" /></Ic>,
                ],
              ]}
            />
          </div>
        </Panel>
        <Panel title="Promine tools" w="w-[222px]" last>
          <Big icon={<Axes />} lines={['Plan', 'World']} w="w-[47px]" more />
          <Big icon={Props} lines={['Promine', 'Properties']} w="w-[62px]" more />
          <Big icon={Key} lines={['License']} w="w-9" />
          <Big icon={Options} lines={['Promine', 'Options']} w="w-[42px]" />
          <Big icon={MLogo} lines={['Help']} w="w-[34px]" />
        </Panel>
      </div>

      <nav className="flex h-[22px] items-center bg-[#222933] pl-1.5">
        <Slash />
        <button className="px-1.5">Start</button>
        <div className="flex h-5 items-center gap-1.5 self-end bg-[#3e4353] pr-2.5 pl-3 font-bold text-white [clip-path:polygon(7px_0,100%_0,calc(100%_-_7px)_100%,0_100%)]">
          MATCHPROP*
          <button aria-label="Close tab"><Ic s={8} v={8}><path d="M.5.5l7 7m0-7l-7 7" stroke="#c3c7cd" strokeWidth="1.200" /></Ic></button>
        </div>
        <button aria-label="New tab" className="mx-1.5"><Ic s={11} v={11}><path d="M5.500 0v11M0 5.500h11" stroke={W} strokeWidth="1.600" /></Ic></button>
        <Slash />
      </nav>
      <div className="h-[3px] bg-[#3b414b]" />

      <main className="relative flex flex-1 flex-col justify-end">
        <Drawing />
        <p className="absolute left-px top-1">[−][Top][2D Wireframe]</p>
        <div className="absolute right-1 top-[7px] flex">
          <button aria-label="Minimize drawing" className="flex w-4 justify-center"><Ic s={10} v={10}><path d="M1 7.500h8" stroke="#fff" strokeWidth="2" /></Ic></button>
          <button aria-label="Restore drawing" className="flex w-4 justify-center"><Ic s={10} v={10}><path d="M1.500 3.500h5v5h-5zM3.500 1.500h5v5" stroke="#fff" strokeWidth="1.400" /></Ic></button>
          <button aria-label="Close drawing" className="flex w-4 justify-center"><Ic s={10} v={10}><path d="M2 2l6 6m0-6L2 8" stroke="#fff" strokeWidth="1.800" /></Ic></button>
        </div>
        <ViewCube />
        <NavBar />
        <CommandLine />
      </main>

      <div className="h-1 bg-[#3b414b]" />
      <nav className="flex h-6 items-start bg-[#212830]">
        <button className="ml-1.5 h-5 bg-[#3e4353] px-3.5 font-bold text-white [clip-path:polygon(7px_0,100%_0,calc(100%_-_7px)_100%,0_100%)]">Model</button>
        <div className="flex h-5 items-center">
          <button className="px-1">Layout1</button>
          <Slash />
          <button className="px-1">Layout2</button>
          <Slash />
          <button aria-label="New layout" className="mx-1.5"><Ic s={11} v={11}><path d="M5.500 0v11M0 5.500h11" stroke={W} strokeWidth="1.600" /></Ic></button>
          <Slash />
        </div>
      </nav>
      <StatusBar />
      <div className="h-0.5 bg-[#222833]" />
    </div>
  );
}
